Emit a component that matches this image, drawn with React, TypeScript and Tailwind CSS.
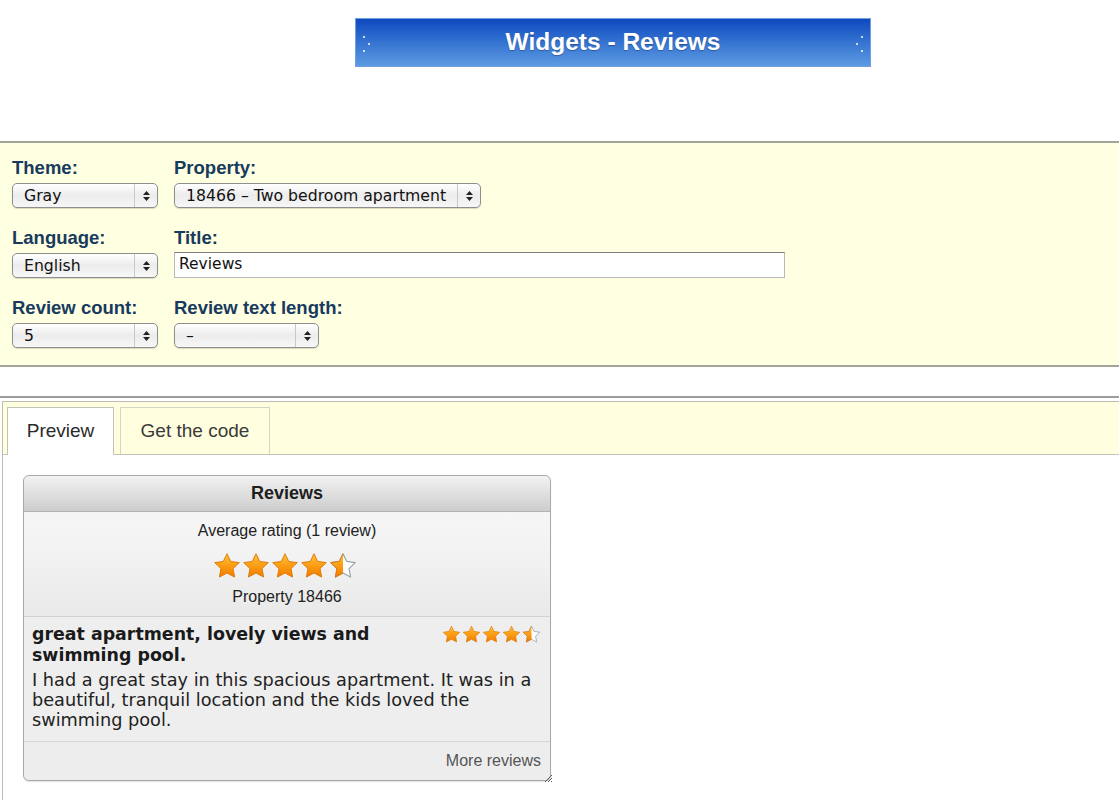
import React from 'react';

const sans = { fontFamily: '"Liberation Sans", Arial, sans-serif' };
const dejavu = { fontFamily: '"DejaVu Sans", Verdana, sans-serif' };

const STAR = '12,1.5 15.2,8.1 22.5,9.1 17.2,14.2 18.5,21.5 12,18 5.5,21.5 6.8,14.2 1.5,9.1 8.8,8.1';

function Star({ size, id, half = false }: { size: number; id: string; half?: boolean }) {
  return (
    <svg width={size} height={size} viewBox="0 0 24 24">
      <defs>
        <linearGradient id={`g-${id}`} x1="0" y1="0" x2="0" y2="1">
          <stop offset="0" stopColor="#ffc53d" />
          <stop offset="0.55" stopColor="#fb9a10" />
          <stop offset="1" stopColor="#f07c00" />
        </linearGradient>
        <clipPath id={`c-${id}`}>
          <rect x="0" y="0" width="12" height="24" />
        </clipPath>
      </defs>
      {half ? (
        <>
          <polygon points={STAR} fill="#fff" stroke="#9aa4ac" strokeWidth="1" strokeLinejoin="round" />
          <polygon points={STAR} fill={`url(#g-${id})`} stroke="#e07400" strokeWidth="0.8" strokeLinejoin="round" clipPath={`url(#c-${id})`} />
        </>
      ) : (
        <polygon points={STAR} fill={`url(#g-${id})`} stroke="#e07400" strokeWidth="0.8" strokeLinejoin="round" />
      )}
    </svg>
  );
}

function Stars({ size, prefix, gap }: { size: number; prefix: string; gap: string }) {
  return (
    <div className={`flex ${gap}`}>
      {[0, 1, 2, 3].map((i) => (
        <Star key={i} size={size} id={`${prefix}${i}`} />
      ))}
      <Star size={size} id={`${prefix}h`} half />
    </div>
  );
}

function Select({ value, width }: { value: string; width: string }) {
  return (
    <div
      className={`${width} h-[25px] flex items-center rounded-[5px] border border-[#8e8e8e] bg-gradient-to-b from-white via-[#ececec] to-[#f7f7f7] shadow-[0_1px_1px_rgba(0,0,0,0.15)] overflow-hidden`}
    >
      <div className="flex-1 min-w-0 pl-[11px] text-[15.7px] text-[#111] whitespace-nowrap overflow-hidden" style={dejavu}>
        {value}
      </div>
      <div className="w-[23px] h-full border-l border-[#c8c8c8] flex flex-col items-center justify-center gap-[2px]">
        <svg width="7" height="4" viewBox="0 0 7 4"><polygon points="0,4 3.5,0 7,4" fill="#222" /></svg>
        <svg width="7" height="4" viewBox="0 0 7 4"><polygon points="0,0 7,0 3.5,4" fill="#222" /></svg>
      </div>
    </div>
  );
}

function Field({ label, children }: { label: string; children: React.ReactNode }) {
  return (
    <div className="flex flex-col">
      <div className="text-[18.5px] leading-[22px] font-bold text-[#173a5e]" style={sans}>
        {label}
      </div>
      <div className="mt-[4px]">{children}</div>
    </div>
  );
}

export default function App() {
  return (
    <div className="w-[1119px] h-[800px] overflow-hidden bg-white" style={sans}>
      {/* Title bar */}
      <div className="pt-[18px]">
        <div className="relative ml-[355px] w-[516px] h-[49px] border border-[#6f9fdc] bg-gradient-to-b from-[#0f48bf] to-[#5d9be2] flex items-center justify-center">
          <span className="text-white text-[24.5px] font-bold [text-shadow:0_1px_1px_rgba(0,0,0,0.3)]">Widgets - Reviews</span>
          <span className="absolute left-[7px] top-[17px] w-[2px] h-[2px] rounded-full bg-white" />
          <span className="absolute left-[12px] top-[24px] w-[2px] h-[2px] rounded-full bg-white" />
          <span className="absolute left-[7px] top-[31px] w-[2px] h-[2px] rounded-full bg-white" />
          <span className="absolute right-[7px] top-[17px] w-[2px] h-[2px] rounded-full bg-white" />
          <span className="absolute right-[12px] top-[24px] w-[2px] h-[2px] rounded-full bg-white" />
          <span className="absolute right-[7px] top-[31px] w-[2px] h-[2px] rounded-full bg-white" />
        </div>
      </div>

      {/* Settings */}
      <div className="mt-[74px] border-t-2 border-b-2 border-[#a3a39a] bg-[#ffffe1] pl-[12px] pt-[14px] pb-[17px]">
        <div className="grid grid-cols-[146px_auto] gap-x-[16px] gap-y-[19px] justify-start">
          <Field label="Theme:">
            <Select value="Gray" width="w-[146px]" />
          </Field>
          <Field label="Property:">
            <Select value="18466 – Two bedroom apartment" width="w-[307px]" />
          </Field>
          <Field label="Language:">
            <Select value="English" width="w-[146px]" />
          </Field>
          <Field label="Title:">
            <div className="w-[611px] h-[26px] -mt-[1px] bg-white border border-[#b9b9b9] border-t-[#7d7d7d] flex items-center pl-[4px] text-[15.5px] text-[#111]" style={dejavu}>
              Reviews
            </div>
          </Field>
          <Field label="Review count:">
            <Select value="5" width="w-[146px]" />
          </Field>
          <Field label="Review text length:">
            <Select value="–" width="w-[145px]" />
          </Field>
        </div>
      </div>

      {/* Tabs */}
      <div className="mt-[29px] border-t-2 border-[#9d9d9d]" />
      <div className="mt-[3px] ml-[2px] border-l border-t border-[#bdbdb5] h-[400px]">
        <div className="h-[53px] bg-[#ffffe0] border-b border-[#c2c2b8] flex items-end pl-[4px] gap-[6px]">
          <div className="w-[107px] h-[48px] -mb-[1px] bg-white border border-b-0 border-[#c2c2b8] flex items-center justify-center text-[19px] text-[#2a2a2a]">
            Preview
          </div>
          <div className="w-[150px] h-[47px] border border-b-0 border-[#d4d4c4] flex items-center justify-center text-[19px] text-[#3a3a3a]">
            Get the code
          </div>
        </div>

        <div className="pl-[20px] pt-[20px]">
          {/* Review widget */}
          <div className="relative w-[528px] rounded-[6px] border border-[#a9a9a9] bg-[#efefef] shadow-[0_1px_1px_rgba(0,0,0,0.12)]">
            <div className="h-[36px] rounded-t-[6px] bg-gradient-to-b from-[#f2f2f2] to-[#cdcdcd] border-b border-[#b3b3b3] flex items-center justify-center text-[18px] font-bold text-[#1e1e1e]">
              Reviews
            </div>
            <div className="bg-gradient-to-b from-[#f6f6f6] via-[#f1f1f1] to-[#e9e9e9] border-b border-[#d2d2d2] pt-[9px] pb-[9px] flex flex-col items-center">
              <div className="text-[16px] leading-[20px] text-[#222]">Average rating (1 review)</div>
              <div className="mt-[11px] -ml-[4px]">
                <Stars size={28} prefix="b" gap="gap-[1px]" />
              </div>
              <div className="mt-[7px] text-[16px] leading-[20px] text-[#222]">Property 18466</div>
            </div>
            <div className="bg-[#eeeeee] border-b border-[#d6d6d6] pl-[8px] pr-[9px] pt-[7px] pb-[11px]" style={dejavu}>
              <div className="flex items-start justify-between">
                <div className="w-[400px] text-[17.4px] leading-[21px] font-bold text-[#1a1a1a]">
                  great apartment, lovely views and swimming pool.
                </div>
                <div className="pt-[1px]">
                  <Stars size={19} prefix="s" gap="gap-[1px]" />
                </div>
              </div>
              <div className="mt-[4px] w-[506px] text-[17.7px] leading-[20px] text-[#222]">
                I had a great stay in this spacious apartment. It was in a beautiful, tranquil location and the kids loved the swimming pool.
              </div>
            </div>
            <div className="h-[38px] rounded-b-[6px] bg-[#ededed] flex items-center justify-end pr-[9px] text-[16px] text-[#555]">
              More reviews
            </div>
            <svg className="absolute -right-[3px] -bottom-[3px]" width="10" height="10" viewBox="0 0 10 10">
              <path d="M9 2 L2 9 M9 5 L5 9 M9 8 L8 9" stroke="#555" strokeWidth="1" />
            </svg>
          </div>
        </div>
      </div>
    </div>
  );
}
